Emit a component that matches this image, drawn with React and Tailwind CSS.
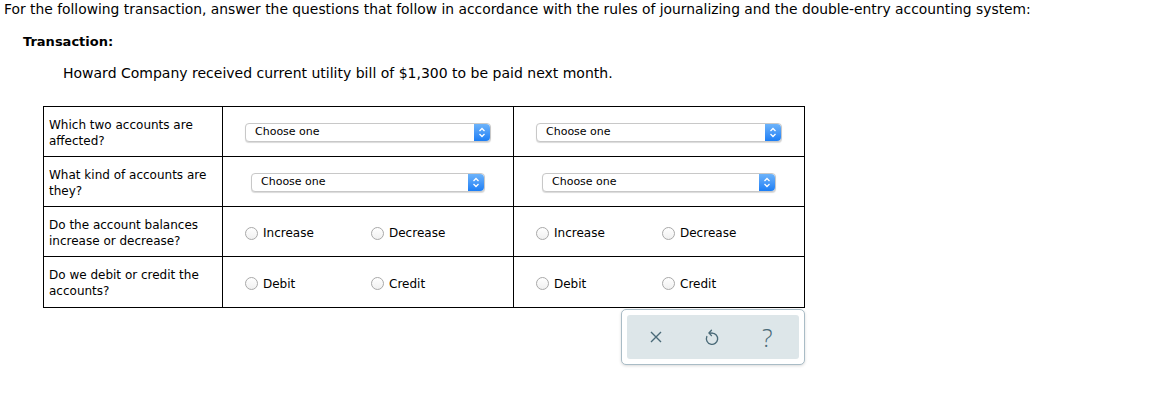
import React from "react";

const font = { fontFamily: '"DejaVu Sans", Verdana, sans-serif' };

function Select({ width }) {
  return (
    <div
      className={`flex h-[19px] items-stretch rounded-[4px] border border-[#c8c8c8] bg-white shadow-[0_1px_1px_rgba(0,0,0,0.15)] ${width}`}
    >
      <span className="flex flex-1 items-center pl-[9px] text-[11px] text-black">Choose one</span>
      <span className="flex w-[16px] items-center justify-center rounded-r-[4px] bg-gradient-to-b from-[#6cb3fa] to-[#1a7ef5]">
        <svg width="8" height="11" viewBox="0 0 8 11" fill="none" stroke="white" strokeWidth="1.3">
          <path d="M1.5 4 L4 1.5 L6.5 4" />
          <path d="M1.5 7 L4 9.5 L6.5 7" />
        </svg>
      </span>
    </div>
  );
}

function Radio({ label }) {
  return (
    <div className="flex items-center gap-[5px] text-[12px] text-black">
      <span className="h-[13px] w-[13px] rounded-full border border-[#a9a9a9] bg-gradient-to-b from-white to-[#f0f0f0]"></span>
      <span>{label}</span>
    </div>
  );
}

function RadioCell({ a, b }) {
  return (
    <td className="border border-black align-middle">
      <div className="grid grid-cols-[126px_1fr] pl-[22px] pt-[3px]">
        <Radio label={a} />
        <Radio label={b} />
      </div>
    </td>
  );
}

function Label({ children }) {
  return (
    <td className="border border-black px-[5px] pt-[2px] align-middle text-[12px] leading-[16px] text-black">
      <div className="w-[168px]">{children}</div>
    </td>
  );
}

function SelectCell({ width }) {
  return (
    <td className="w-[291px] border border-black pt-[1px]">
      <div className="flex justify-center">
        <Select width={width} />
      </div>
    </td>
  );
}

export default function App() {
  return (
    <div className="min-h-[406px] bg-white text-black" style={font}>
      <p className="pl-[4px] pt-[1px] text-[13.85px] leading-[17px]">
        For the following transaction, answer the questions that follow in accordance with the rules of journalizing and the double-entry accounting system:
      </p>
      <p className="pl-[23px] pt-[15px] text-[13px] font-bold leading-[17px]">Transaction:</p>
      <p className="pl-[63px] pt-[15px] text-[14px] leading-[17px]">
        Howard Company received current utility bill of $1,300 to be paid next month.
      </p>

      <table className="ml-[43px] mt-[24px] border-collapse">
        <tbody>
          <tr className="h-[50px]">
            <Label>Which two accounts are affected?</Label>
            <SelectCell width="w-[246px]" />
            <SelectCell width="w-[246px]" />
          </tr>
          <tr className="h-[50px]">
            <Label>What kind of accounts are they?</Label>
            <SelectCell width="w-[234px]" />
            <SelectCell width="w-[234px]" />
          </tr>
          <tr className="h-[50px]">
            <Label>Do the account balances increase or decrease?</Label>
            <RadioCell a="Increase" b="Decrease" />
            <RadioCell a="Increase" b="Decrease" />
          </tr>
          <tr className="h-[51px]">
            <Label>Do we debit or credit the accounts?</Label>
            <RadioCell a="Debit" b="Credit" />
            <RadioCell a="Debit" b="Credit" />
          </tr>
        </tbody>
      </table>

      <div className="ml-[621px] mt-[1px] w-[184px] rounded-[5px] border border-[#a9bcc6] bg-white p-[5px] shadow-[0_1px_3px_rgba(0,0,0,0.15)]">
        <div className="flex h-[44px] items-center rounded-[3px] bg-[#dde6e9] pl-[22px] text-[#4a6a78]">
          <svg width="14" height="14" viewBox="0 0 14 14" fill="none" stroke="currentColor" strokeWidth="1.4">
            <path d="M2 2 L12 12 M12 2 L2 12" />
          </svg>
          <svg className="ml-[41px]" width="16" height="18" viewBox="0 0 14 16" fill="none" stroke="currentColor" strokeWidth="1.2" strokeLinecap="round">
            <path d="M7 4.5 A5 5 0 1 1 2.4 7.6" />
            <path d="M7 4.5 L4.5 4.5 M6.5 2 L4.3 4.5 L6.5 6.8" />
          </svg>
          <span className="ml-[42px] text-[25px] leading-none text-[#4a6a78]" style={{ fontFamily: '"Open Sans", sans-serif', fontWeight: 300 }}>?</span>
        </div>
      </div>
    </div>
  );
}
